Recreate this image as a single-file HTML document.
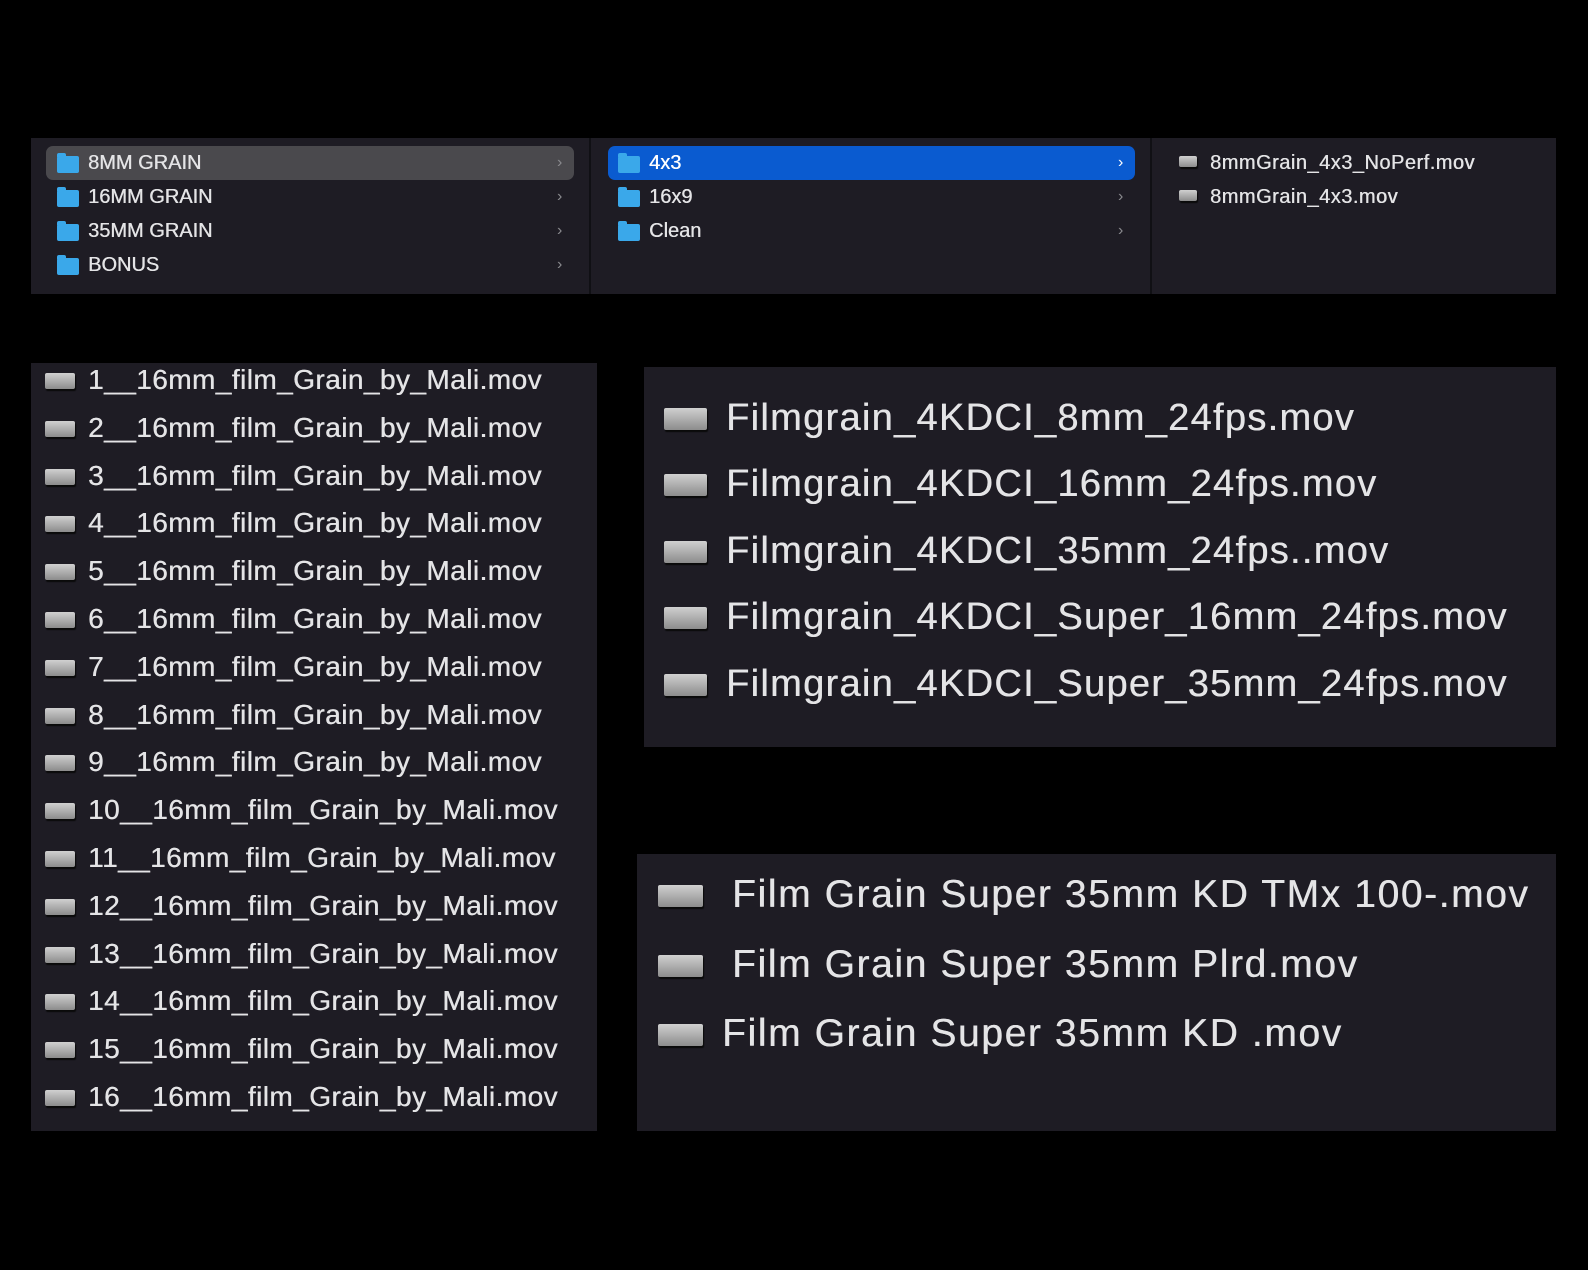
<!DOCTYPE html>
<html><head><meta charset="utf-8"><style>
body{margin:0;width:1588px;height:1270px;background:#000;position:relative;overflow:hidden;font-family:"Liberation Sans",Arial,sans-serif;color:#e4e4e6}
.p{position:absolute;background:#1e1c24}
.t{position:absolute;white-space:nowrap;line-height:1;z-index:2;text-shadow:0.4px 0 0 currentColor}
.f{position:absolute;width:22px;height:17px;background:#3aa8ea;border-radius:2px;z-index:2}
.f:before{content:"";position:absolute;left:0;top:-3px;width:9px;height:4px;background:#3aa8ea;border-radius:2px 2px 0 0}
.m{position:absolute;background:linear-gradient(#d0d0d0,#8c8c8c);border-radius:2px;box-shadow:1px 2px 1px #0a0a0a;z-index:2}
.c{position:absolute;color:#8a8a8e;font-size:16px;z-index:2}
</style></head><body>
<div class="p" style="left:31px;top:138px;width:1525px;height:156px"></div>
<div style="position:absolute;left:589px;top:138px;width:2px;height:156px;background:#101014"></div>
<div style="position:absolute;left:1150px;top:138px;width:2px;height:156px;background:#101014"></div>
<div style="position:absolute;left:46px;top:146px;width:528px;height:34px;background:#4a494d;border-radius:7px"></div>
<div style="position:absolute;left:608px;top:146px;width:527px;height:34px;background:#0a5bd0;border-radius:7px"></div>
<div class="f" style="left:57px;top:156px"></div><div class="t" style="left:88px;top:153px;font-size:20px">8MM GRAIN</div><div class="c" style="left:557px;top:154px">›</div>
<div class="f" style="left:57px;top:190px"></div><div class="t" style="left:88px;top:187px;font-size:20px">16MM GRAIN</div><div class="c" style="left:557px;top:188px">›</div>
<div class="f" style="left:57px;top:224px"></div><div class="t" style="left:88px;top:221px;font-size:20px">35MM GRAIN</div><div class="c" style="left:557px;top:222px">›</div>
<div class="f" style="left:57px;top:258px"></div><div class="t" style="left:88px;top:255px;font-size:20px">BONUS</div><div class="c" style="left:557px;top:256px">›</div>
<div class="f" style="left:618px;top:156px"></div><div class="t" style="left:649px;top:153px;font-size:20px;color:#fff">4x3</div><div class="c" style="left:1118px;top:154px;color:#fff">›</div>
<div class="f" style="left:618px;top:190px"></div><div class="t" style="left:649px;top:187px;font-size:20px">16x9</div><div class="c" style="left:1118px;top:188px">›</div>
<div class="f" style="left:618px;top:224px"></div><div class="t" style="left:649px;top:221px;font-size:20px">Clean</div><div class="c" style="left:1118px;top:222px">›</div>
<div class="m" style="left:1179px;top:156px;width:18px;height:11px"></div><div class="t" style="left:1210px;top:153px;font-size:20px;letter-spacing:0.5px">8mmGrain_4x3_NoPerf.mov</div>
<div class="m" style="left:1179px;top:190px;width:18px;height:11px"></div><div class="t" style="left:1210px;top:187px;font-size:20px;letter-spacing:0.5px">8mmGrain_4x3.mov</div>

<div class="p" style="left:31px;top:363px;width:566px;height:768px"></div>
<div class="p" style="left:644px;top:367px;width:912px;height:380px"></div>
<div class="p" style="left:637px;top:854px;width:919px;height:277px"></div>
<div id="l"></div>
<script>
var h='';
for(var i=1;i<=16;i++){var y=380+(i-1)*47.8;
h+='<div class="m" style="left:45px;top:'+(y-7)+'px;width:30px;height:16px"></div><div class="t" style="left:88px;top:'+(y-14)+'px;font-size:28px;letter-spacing:0.45px">'+i+'__16mm_film_Grain_by_Mali.mov</div>';}
var a=['Filmgrain_4KDCI_8mm_24fps.mov','Filmgrain_4KDCI_16mm_24fps.mov','Filmgrain_4KDCI_35mm_24fps..mov','Filmgrain_4KDCI_Super_16mm_24fps.mov','Filmgrain_4KDCI_Super_35mm_24fps.mov'];
for(var j=0;j<5;j++){var y=418+j*66.4;
h+='<div class="m" style="left:664px;top:'+(y-10)+'px;width:43px;height:22px"></div><div class="t" style="left:726px;top:'+(y-19)+'px;font-size:38px;letter-spacing:1.3px">'+a[j]+'</div>';}
var b=[['Film Grain Super 35mm KD TMx 100-.mov',732],['Film Grain Super 35mm Plrd.mov',732],['Film Grain Super 35mm KD .mov',722]];
for(var k=0;k<3;k++){var y=895+k*69.5;
h+='<div class="m" style="left:658px;top:'+(y-10)+'px;width:45px;height:22px"></div><div class="t" style="left:'+b[k][1]+'px;top:'+(y-20)+'px;font-size:39px;letter-spacing:1.6px">'+b[k][0]+'</div>';}
document.getElementById('l').outerHTML=h;
</script>
</body></html>
